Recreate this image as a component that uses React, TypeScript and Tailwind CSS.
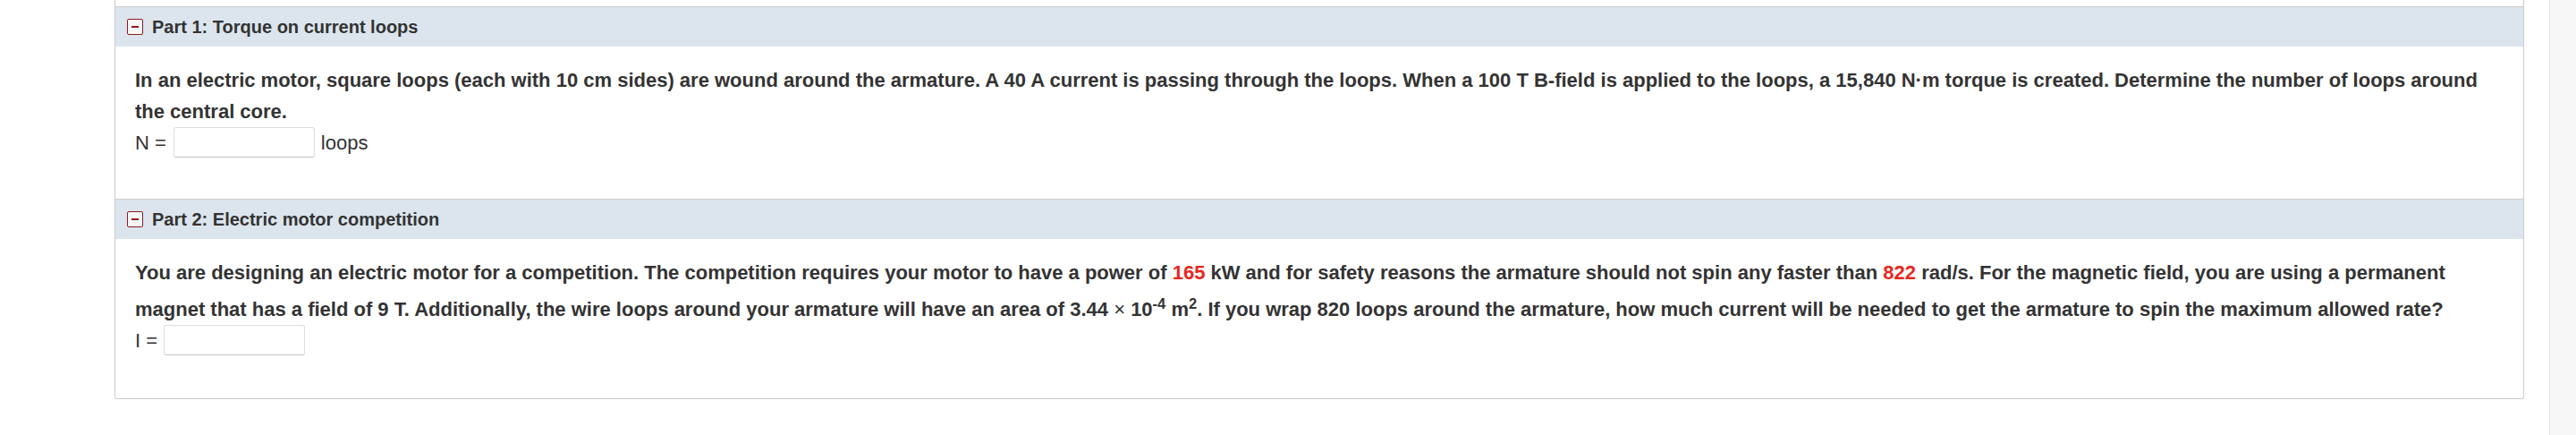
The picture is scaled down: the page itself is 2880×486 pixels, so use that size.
import React from "react";

function CollapseIcon() {
  return (
    <span className="w-[18px] h-[18px] border border-[#8e1b1b] rounded-[2px] bg-[#f7f7f7] flex items-center justify-center shrink-0">
      <span className="w-[8px] h-[2px] bg-[#8e1b1b]" />
    </span>
  );
}

function AnswerBox() {
  return (
    <span className="inline-block w-[158px] h-[34px] bg-white border border-[#dedede] border-b-[#c4c4c4] rounded-[3px]" />
  );
}

function PartHeader({ title }: { title: string }) {
  return (
    <div className="h-[45px] border-t border-[#cccccc] bg-[#dce5ee] flex items-center pl-[13px] gap-[10px]">
      <CollapseIcon />
      <span className="text-[20px] font-bold text-[#333333]">{title}</span>
    </div>
  );
}

const red = "text-[#e8271d]";

export default function App() {
  return (
    <div className="w-full h-[486px] bg-white flex font-['Liberation_Sans',Arial,sans-serif] text-[#333333]">
      <div className="flex-1 pl-[128px] pr-[28px]">
        <div className="border-x border-b border-[#cccccc] rounded-b-[3px]">
          <div className="h-[7px]" />

          {/* Part 1 */}
          <PartHeader title="Part 1: Torque on current loops" />
          <div className="px-[22px] pt-[20px] pb-[46px]">
            <p className="text-[22px] font-bold leading-[35px]">
              In an electric motor, square loops (each with 10 cm sides) are wound around the
              armature. A 40 A current is passing through the loops. When a 100 T B-field is
              applied to the loops, a 15,840 N·m torque is created. Determine the number of loops
              around the central core.
            </p>
            <div className="flex items-center h-[34px] text-[22px]">
              <span className="mr-[8px]">N =</span>
              <AnswerBox />
              <span className="ml-[7px]">loops</span>
            </div>
          </div>

          {/* Part 2 */}
          <PartHeader title="Part 2: Electric motor competition" />
          <div className="px-[22px] pt-[20px] pb-[48px]">
            <p className="text-[22px] font-bold leading-[35px]">
              You are designing an electric motor for a competition. The competition requires your
              motor to have a power of <span className={red}>165</span> kW and for safety reasons
              the armature should not spin any faster than <span className={red}>822</span> rad/s.
              For the magnetic field, you are using a permanent magnet that has a field of 9 T.
              Additionally, the wire loops around your armature will have an area of 3.44{" "}
              <span className="font-normal">×</span> 10
              <sup className="static align-super leading-[34px] text-[75%]">-4</sup> m
              <sup className="static align-super leading-[34px] text-[75%]">2</sup>. If you wrap
              820 loops around the armature, how much current will be needed to get the armature
              to spin the maximum allowed rate?
            </p>
            <div className="flex items-center h-[34px] text-[22px]">
              <span className="mr-[7px]">I =</span>
              <AnswerBox />
            </div>
          </div>
        </div>
      </div>
      <div className="w-[30px] bg-[#f7f7f7] border-l border-[#e6e6e6]" />
    </div>
  );
}
